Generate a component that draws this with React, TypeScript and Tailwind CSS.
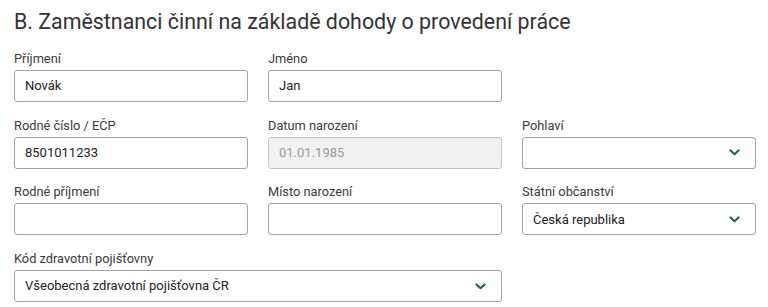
import React from "react";

const Chevron = () => (
  <svg width="11" height="7" viewBox="0 0 11 7" className="shrink-0">
    <polyline points="1.5,1.5 5.5,5.2 9.5,1.5" fill="none" stroke="#1f6b34" strokeWidth="2.2" strokeLinecap="round" strokeLinejoin="round" />
  </svg>
);

function Field({ label, value, disabled }: { label: string; value?: string; disabled?: boolean }) {
  return (
    <div className="flex flex-col">
      <label className="h-[18px] mb-[2px] text-[12.8px] leading-[18px] text-[#3a3a3a]">{label}</label>
      <div
        className={
          disabled
            ? "h-[32px] rounded-[3px] border border-[#c4c4c4] bg-[#f1f1f1] px-[10px] flex items-center text-[13px] text-[#9a9a9a]"
            : "h-[32px] rounded-[3px] border border-[#a3a3a3] bg-white px-[10px] flex items-center text-[13px] text-[#222]"
        }
      >
        {value}
      </div>
    </div>
  );
}

function SelectField({ label, value, className }: { label: string; value?: string; className?: string }) {
  return (
    <div className={"flex flex-col " + (className ?? "")}>
      <label className="h-[18px] mb-[2px] text-[12.8px] leading-[18px] text-[#3a3a3a]">{label}</label>
      <div className="h-[32px] rounded-[3px] border border-[#a3a3a3] bg-white pl-[10px] pr-[15px] flex items-center justify-between text-[13px] text-[#222]">
        <span>{value}</span>
        <Chevron />
      </div>
    </div>
  );
}

export default function App() {
  return (
    <div className="w-[768px] h-[307px] bg-white overflow-hidden pl-[14px] pt-[7px]" style={{ fontFamily: "Roboto, 'Liberation Sans', sans-serif" }}>
      <h2 className="text-[21.4px] leading-[30px] text-[#333] font-normal">B. Zaměstnanci činní na základě dohody o provedení práce</h2>
      <div className="mt-[13px] grid grid-cols-[234px_234px_234px] gap-x-[20px] gap-y-[14.7px]">
        <Field label="Příjmení" value="Novák" />
        <Field label="Jméno" value="Jan" />
        <div />
        <Field label="Rodné číslo / EČP" value="8501011233" />
        <Field label="Datum narození" value="01.01.1985" disabled />
        <SelectField label="Pohlaví" />
        <Field label="Rodné příjmení" />
        <Field label="Místo narození" />
        <SelectField label="Státní občanství" value="Česká republika" />
        <SelectField label="Kód zdravotní pojišťovny" value="Všeobecná zdravotní pojišťovna ČR" className="col-span-2" />
      </div>
    </div>
  );
}
